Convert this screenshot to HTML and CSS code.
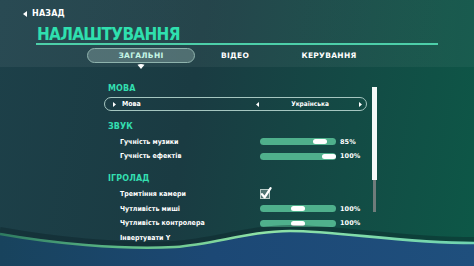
FILE: index.html
```html
<!DOCTYPE html>
<html lang="uk">
<head>
<meta charset="utf-8">
<title>Налаштування</title>
<link rel="stylesheet" href="styles.css">
</head>
<body>
<div class="screen">
  <header class="header">
    <div class="back">
      <svg class="back-arrow" width="4" height="6" viewBox="0 0 4 6"><polygon points="4,0 4,6 0,3" fill="#fff"/></svg>
      <span>НАЗАД</span>
    </div>
    <h1 class="title">НАЛАШТУВАННЯ</h1>
    <nav class="tabs">
      <div class="tab active">ЗАГАЛЬНІ
        <svg class="tab-pointer" width="8" height="5" viewBox="0 0 8 5"><path d="M0.5 0.8 Q4 -0.6 7.5 0.8 L4 5 Z" fill="#fff"/></svg>
      </div>
      <div class="tab">ВІДЕО</div>
      <div class="tab">КЕРУВАННЯ</div>
    </nav>
  </header>

  <main class="content">
    <div class="list">
      <section class="section">
        <h2 class="section-title">МОВА</h2>
        <div class="select-row">
          <svg class="marker" width="3" height="5" viewBox="0 0 3 5"><polygon points="0,0 3,2.5 0,5" fill="#fff"/></svg>
          <span class="select-label">Мова</span>
          <div class="selector">
            <svg width="3" height="5" viewBox="0 0 3 5"><polygon points="3,0 3,5 0,2.5" fill="#fff"/></svg>
            <span class="selector-value">Українська</span>
            <svg width="3" height="5" viewBox="0 0 3 5"><polygon points="0,0 3,2.5 0,5" fill="#fff"/></svg>
          </div>
        </div>
      </section>

      <section class="section">
        <h2 class="section-title">ЗВУК</h2>
        <div class="row">
          <span class="label">Гучність музики</span>
          <div class="slider"><span class="knob" style="left:52.7px"></span></div>
          <span class="value">85%</span>
        </div>
        <div class="row">
          <span class="label">Гучність ефектів</span>
          <div class="slider"><span class="knob" style="left:62px"></span></div>
          <span class="value">100%</span>
        </div>
      </section>

      <section class="section">
        <h2 class="section-title">ІГРОЛАД</h2>
        <div class="row">
          <span class="label">Тремтіння камери</span>
          <div class="checkbox checked">
            <svg class="check" width="12" height="13" viewBox="0 0 12 13"><path d="M2 7.2 L4.6 10.4 L10.6 1.2" fill="none" stroke="#fff" stroke-width="2.2" stroke-linecap="round" stroke-linejoin="round"/></svg>
          </div>
          <span class="value"></span>
        </div>
        <div class="row">
          <span class="label">Чутливість миші</span>
          <div class="slider"><span class="knob" style="left:31px"></span></div>
          <span class="value">100%</span>
        </div>
        <div class="row">
          <span class="label">Чутливість контролера</span>
          <div class="slider"><span class="knob" style="left:31px"></span></div>
          <span class="value">100%</span>
        </div>
        <div class="row">
          <span class="label">Інвертувати Y</span>
          <div class="checkbox"></div>
          <span class="value"></span>
        </div>
      </section>
    </div>
    <div class="scrollbar"><div class="scroll-thumb"></div></div>
  </main>

  <svg class="wave" width="474" height="45" viewBox="0 0 474 45" preserveAspectRatio="none">
    <defs>
      <linearGradient id="sea" x1="0" y1="0" x2="1" y2="0">
        <stop offset="0" stop-color="#18435d"/>
        <stop offset="0.45" stop-color="#1c4875"/>
        <stop offset="1" stop-color="#1f4f7d"/>
      </linearGradient>
      <linearGradient id="crest" x1="0" y1="0" x2="1" y2="0">
        <stop offset="0" stop-color="#2e7a60"/>
        <stop offset="0.25" stop-color="#5cb987"/>
        <stop offset="0.55" stop-color="#8fe2a6"/>
        <stop offset="1" stop-color="#6fd3b0"/>
      </linearGradient>
    </defs>
    <path d="M0 12 C 50 21, 120 29, 175 26 C 215 23, 250 10, 290 10 C 340 10, 400 22, 474 22" fill="none" stroke="rgba(10,30,35,0.35)" stroke-width="6" transform="translate(0,-3)"/>
    <path d="M0 13 C 50 22, 120 29, 175 26 C 215 23, 250 10, 290 10 C 340 10, 400 22, 474 22 V45 H0 Z" fill="url(#sea)"/>
    <path d="M0 13 C 50 22, 120 29, 175 26 C 215 23, 250 10, 290 10 C 340 10, 400 22, 474 22" fill="none" stroke="url(#crest)" stroke-width="2.6"/>
  </svg>
</div>
</body>
</html>
```

FILE: styles.css
```css
* { box-sizing: border-box; margin: 0; padding: 0; }

html, body { width: 474px; height: 266px; overflow: hidden; }

body {
  font-family: "DejaVu Sans", "Noto Sans", sans-serif;
  font-weight: 700;
  color: #fff;
  background: linear-gradient(100deg, #1d4049 0%, #1a3b42 40%, #134b45 72%, #0d5847 100%);
}

.screen { position: relative; width: 474px; height: 266px; overflow: hidden; }

/* Header */
.header {
  height: 67px;
  background: linear-gradient(90deg, rgba(255,255,255,0.055), rgba(255,255,255,0.045));
}

.back {
  display: flex;
  align-items: center;
  gap: 5px;
  padding: 9px 0 0 23px;
  height: 19px;
  font-size: 8px;
  line-height: 10px;
  letter-spacing: 0.2px;
}

.title {
  margin: 5.5px 0 0 36px;
  width: 402px;
  height: 20px;
  padding-left: 1px;
  font-family: "DejaVu Sans Condensed", "DejaVu Sans", sans-serif;
  font-stretch: condensed;
  font-size: 17px;
  line-height: 18px;
  font-weight: 700;
  letter-spacing: -0.7px;
  color: #2fe0af;
  border-bottom: 2px solid #4dcfa9;
}

.tabs {
  display: grid;
  grid-template-columns: repeat(3, 94px);
  margin: 3.5px 0 0 94px;
}

.tab {
  position: relative;
  height: 15px;
  line-height: 15px;
  text-align: center;
  font-size: 7.5px;
  letter-spacing: 0.3px;
  white-space: nowrap;
}

.tab.active {
  margin: 0 -7px;
  color: #c6f6e6;
  background: rgba(160, 190, 185, 0.35);
  border: 1px solid #8fb3ad;
  border-radius: 8px;
  line-height: 13px;
}

.tab-pointer {
  position: absolute;
  left: 50%;
  top: calc(100% + 2px);
  transform: translateX(-50%);
}

/* Content */
.content {
  display: flex;
  padding-left: 108px;
}

.list {
  width: 259px;
  padding-top: 17px;
  display: flex;
  flex-direction: column;
  gap: 10.5px;
}

.section {
  display: flex;
  flex-direction: column;
}

.section-title {
  height: 10px;
  margin-bottom: 3px;
  font-size: 8px;
  line-height: 10px;
  font-weight: 700;
  color: #33dfb0;
  letter-spacing: 0.1px;
}

.select-row {
  display: flex;
  align-items: center;
  height: 14px;
  margin-left: -4px;
  padding: 0 4px 0 8px;
  border: 1px solid #a5c6c0;
  border-radius: 7px;
  font-size: 7px;
}

.marker { flex: 0 0 3px; }

.select-label {
  flex: 0 0 140px;
  padding-left: 6px;
  font-family: "DejaVu Sans Condensed", "DejaVu Sans", sans-serif;
  font-stretch: condensed;
}

.selector {
  flex: 1;
  display: flex;
  align-items: center;
  justify-content: space-between;
}

.selector-value {
  font-size: 6.5px;
  font-family: "DejaVu Sans Condensed", "DejaVu Sans", sans-serif;
  font-stretch: condensed;
  padding-left: 2px;
}

.row {
  display: grid;
  grid-template-columns: 140px 76px auto;
  align-items: center;
  height: 14.5px;
  padding-left: 12px;
}

.label {
  font-family: "DejaVu Sans Condensed", "DejaVu Sans", sans-serif;
  font-stretch: condensed;
  font-size: 7px;
  white-space: nowrap;
}

.value {
  padding-left: 4px;
  font-size: 6.5px;
  letter-spacing: 0.1px;
}

.slider {
  position: relative;
  height: 7px;
  border-radius: 4px;
  background: #4fb08c;
}

.knob {
  position: absolute;
  top: 1px;
  width: 14px;
  height: 5px;
  border-radius: 3px;
  background: #fff;
}

.checkbox {
  position: relative;
  width: 10px;
  height: 10px;
  background: rgba(190, 205, 202, 0.35);
  border: 1px solid #b9cbc7;
}

.check {
  position: absolute;
  left: -1px;
  top: -3px;
}

/* Scrollbar */
.scrollbar {
  position: relative;
  width: 5px;
  height: 125px;
  margin: 20px 0 0 5px;
  display: flex;
  justify-content: center;
}

.scrollbar::before {
  content: "";
  width: 3px;
  height: 100%;
  background: #6f7c7b;
}

.scroll-thumb {
  position: absolute;
  left: 0;
  top: 0;
  width: 5px;
  height: 93px;
  background: #f4f8f7;
}

/* Decorative wave over the bottom of the list */
.wave {
  position: absolute;
  left: 0;
  bottom: 0;
}
```
